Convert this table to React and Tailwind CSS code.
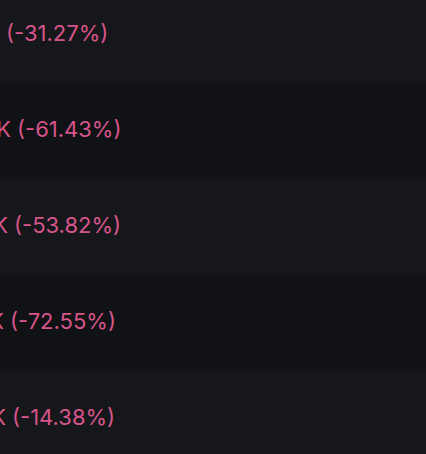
import React from "react";

const rows = [
  { pre: "K", val: "(-31.27%)", w: "w-[6px]", bg: "bg-[#16171b]" },
  { pre: "K", val: "(-61.43%)", w: "w-[17px]", bg: "bg-[#111216]" },
  { pre: "K", val: "(-53.82%)", w: "w-[14px]", bg: "bg-[#16171b]" },
  { pre: "K", val: "(-72.55%)", w: "w-[10px]", bg: "bg-[#111216]" },
  { pre: "K", val: "(-14.38%)", w: "w-[12px]", bg: "bg-[#16171b]" },
];

export default function App() {
  return (
    <div
      className="w-[426px] h-[454px] overflow-hidden bg-[#16171b]"
      style={{ fontFamily: 'Inter, "Liberation Sans", Arial, sans-serif' }}
    >
      <div className="-mt-[15px] flex flex-col">
        {rows.map((r, i) => (
          <div key={i} className={`h-[96px] flex items-center ${r.bg}`}>
            <div className={`${r.w} shrink-0 flex justify-end pr-[6px] whitespace-nowrap text-[22px] text-[#d6558a]`}>
              <span>{r.pre}</span>
            </div>
            <span className="whitespace-nowrap text-[22px] text-[#d6558a]">{r.val}</span>
          </div>
        ))}
      </div>
    </div>
  );
}
